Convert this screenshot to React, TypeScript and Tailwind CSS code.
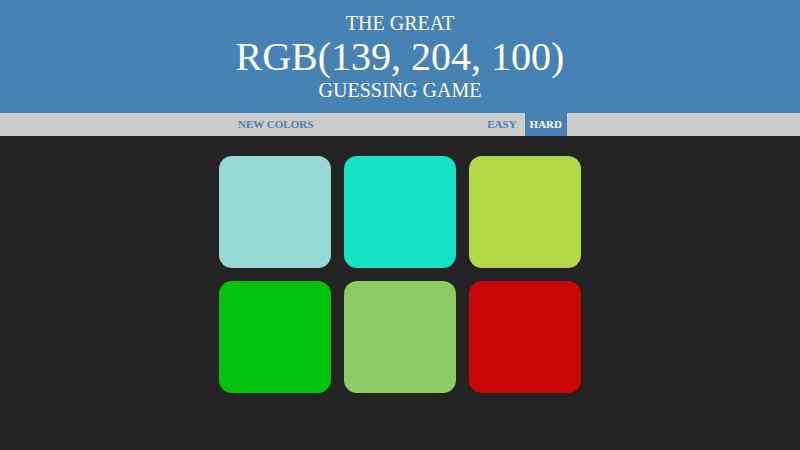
const colors = [
  "#96d9d5",
  "#12e4c8",
  "#b2d846",
  "#00c40c",
  "#8bcc64",
  "#cb0606",
];

export default function App() {
  return (
    <div className="min-h-screen bg-[#232323] font-['Liberation_Serif',serif]">
      {/* Header */}
      <div className="bg-[#4682b4] text-white text-center pt-[11px] pb-[11px]">
        <div className="text-[20px] leading-[24px]">THE GREAT</div>
        <div className="text-[40px] leading-[40px] mt-[2px]">RGB(139, 204, 100)</div>
        <div className="text-[20px] leading-[24px] mt-[1px]">GUESSING GAME</div>
      </div>

      {/* Controls */}
      <div className="bg-[#cccccc] h-[23px]">
        <div className="w-[334px] mx-auto h-full flex items-stretch justify-between text-[11px] font-bold">
          <button className="px-[5px] text-[#4682b4] uppercase">NEW COLORS</button>
          <div className="flex gap-[3px]">
            <button className="px-[5px] text-[#4682b4] uppercase">EASY</button>
            <button className="px-[5px] bg-[#4682b4] text-white uppercase">HARD</button>
          </div>
        </div>
      </div>

      {/* Squares */}
      <div className="w-[362px] mx-auto mt-[20px] grid grid-cols-3 gap-[13px]">
        {colors.map((c) => (
          <div
            key={c}
            className="w-[112px] h-[112px] rounded-[13px]"
            style={{ backgroundColor: c }}
          />
        ))}
      </div>
    </div>
  );
}
